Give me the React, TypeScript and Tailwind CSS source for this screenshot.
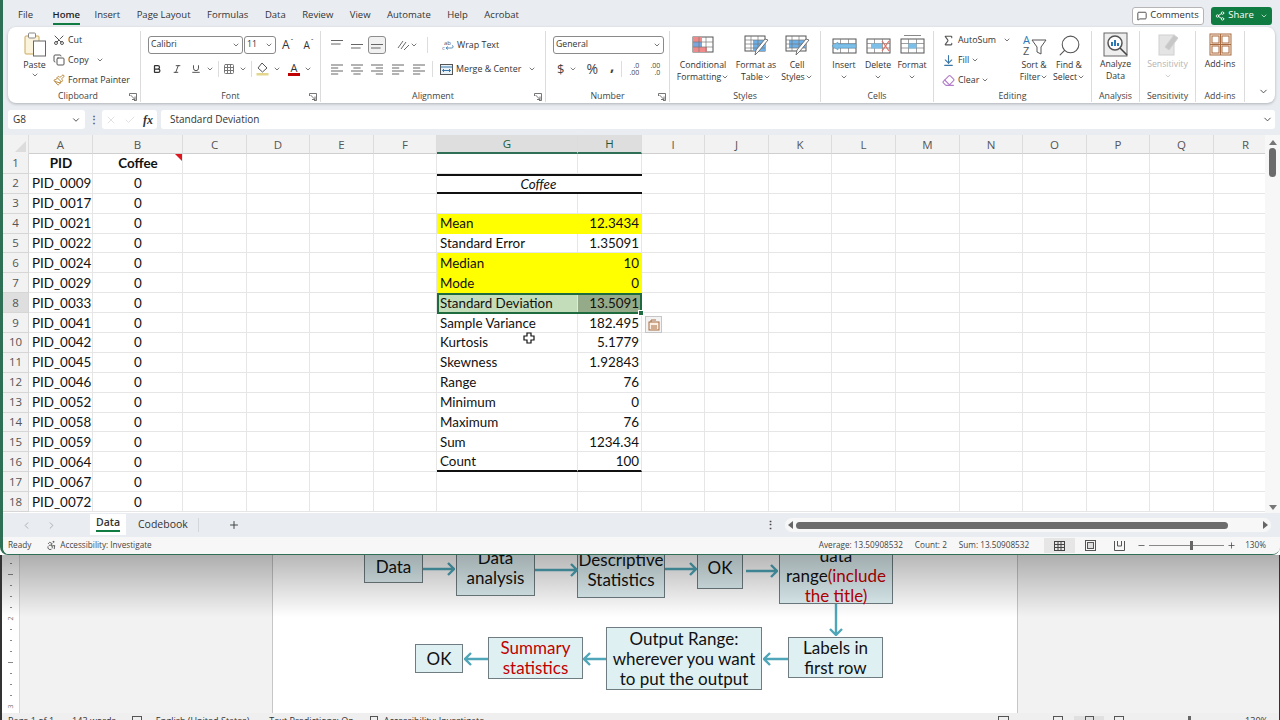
import { ChevronDown, ChevronLeft, ChevronRight, Scissors, Copy, Paintbrush, Bold, Italic, Underline, MessageSquare, Share2, Check, X, Plus, Minus, Search, Sigma, Eraser, ArrowDownToLine, Grid3x3, Accessibility } from 'lucide-react';
import type { ReactNode } from 'react';

const sans = "font-['Open_Sans','Noto_Sans',sans-serif]";

const colHeads = ['A', 'B', 'C', 'D', 'E', 'F', 'G', 'H', 'I', 'J', 'K', 'L', 'M', 'N', 'O', 'P', 'Q', 'R'];
const rowGrid =
  'grid grid-cols-[26px_64px_90px_64px_63px_64px_63px_141px_64px_63px_64px_63px_64px_64px_63px_64px_63px_64px_64px]';

const pids = ['PID_0009', 'PID_0017', 'PID_0021', 'PID_0022', 'PID_0024', 'PID_0029', 'PID_0033', 'PID_0041', 'PID_0042', 'PID_0045', 'PID_0046', 'PID_0052', 'PID_0058', 'PID_0059', 'PID_0064', 'PID_0067', 'PID_0072'];

const stats: Record<number, { label: string; value: string; yellow?: boolean }> = {
  4: { label: 'Mean', value: '12.3434', yellow: true },
  5: { label: 'Standard Error', value: '1.35091' },
  6: { label: 'Median', value: '10', yellow: true },
  7: { label: 'Mode', value: '0', yellow: true },
  8: { label: 'Standard Deviation', value: '13.5091' },
  9: { label: 'Sample Variance', value: '182.495' },
  10: { label: 'Kurtosis', value: '5.1779' },
  11: { label: 'Skewness', value: '1.92843' },
  12: { label: 'Range', value: '76' },
  13: { label: 'Minimum', value: '0' },
  14: { label: 'Maximum', value: '76' },
  15: { label: 'Sum', value: '1234.34' },
  16: { label: 'Count', value: '100' },
};

const rulerMarks = ['-', '=', '-', '-', '-', '2', '-', '-', '-', '=', '-', '-', '-', '3'];

function Tab({ children, active, className = '' }: { children: ReactNode; active?: boolean; className?: string }) {
  return (
    <div className={`${active ? 'relative font-semibold text-[#1d1d1d]' : 'text-[#333]'} ${className}`}>
      {children}
      {active && <div className="absolute left-0 right-0 -bottom-[2px] h-[2px] bg-[#107c41]" />}
    </div>
  );
}

function Group({ width, label, launcher, children }: { width: string; label: string; launcher?: boolean; children: ReactNode }) {
  return (
    <div className={`${width} relative flex flex-col shrink-0 border-r border-[#dcdcdc] mt-[4px] h-[71px]`}>
      <div className="flex-1 min-h-0">{children}</div>
      <div className="h-[12px] flex items-center justify-center text-[8.8px] leading-none text-[#444]">{label}</div>
      {launcher && (
        <svg className="absolute right-[3px] bottom-[1px]" width="8" height="8" viewBox="0 0 8 8" fill="none" stroke="#666" strokeWidth="0.9">
          <path d="M0.5 3V0.5H7.5V7.5H5M1.5 2L6 6.5M6 3.5V6.5H3" />
        </svg>
      )}
    </div>
  );
}

function Big({ icon, lines, caret = true, muted, width = '' }: { icon: ReactNode; lines: string[]; caret?: boolean; muted?: boolean; width?: string }) {
  return (
    <div className={`${width} flex flex-col items-center text-[8.7px] leading-[12px] ${muted ? 'text-[#b5b5b5]' : 'text-[#333]'}`}>
      <div className="h-[26px] flex items-center justify-center">{icon}</div>
      <div className="mt-[1px] text-center whitespace-nowrap">{lines[0]}</div>
      {lines[1] ? (
        <div className="text-center whitespace-nowrap flex items-center">
          {lines[1]}
          {caret && <ChevronDown size={8} />}
        </div>
      ) : (
        caret && <ChevronDown size={8} className="mt-[2px]" />
      )}
    </div>
  );
}

function TableIcon({ cell }: { cell?: boolean }) {
  return (
    <svg width="25" height="24" viewBox="0 0 25 24" fill="none">
      <rect x="1" y="3" width="20" height="15" fill="#fff" stroke="#555" />
      {cell ? <rect x="4" y="7" width="17" height="8" fill="#6cb0ea" /> : <rect x="9" y="7" width="12" height="11" fill="#6cb0ea" />}
      <path d="M1 7H21M1 11H21M1 15H21M7 3V18M14 3V18" stroke="#777" strokeWidth="0.7" />
      <path d="M24 7L15 18L11 22L12 17L21 6Z" fill="#fff" stroke="#666" strokeWidth="0.9" />
    </svg>
  );
}

function CellsIcon({ kind }: { kind: 'insert' | 'delete' | 'format' }) {
  return (
    <svg width="25" height="22" viewBox="0 0 25 22" fill="none">
      <rect x="1" y="5" width="23" height="14" fill="#fff" stroke="#555" />
      <path d="M1 9.5H24M1 14H24M8.5 5V19M16.5 5V19" stroke="#777" strokeWidth="0.7" />
      {kind === 'insert' && <path d="M0 12L6 8V10H24V14H6V16Z" fill="#7cc0ea" stroke="#4a96c8" strokeWidth="0.5" />}
      {kind === 'delete' && (
        <>
          <rect x="5" y="9.5" width="11" height="5" fill="#7cc0ea" />
          <path d="M16 7L23 17M23 7L16 17" stroke="#d9766c" strokeWidth="1.3" />
        </>
      )}
      {kind === 'format' && (
        <>
          <rect x="8.5" y="9.5" width="8" height="5" fill="#7cc0ea" />
          <path d="M4 1.5H21" stroke="#888" />
        </>
      )}
    </svg>
  );
}

function Small({ icon, label, caret, tight }: { icon: ReactNode; label: string; caret?: boolean; tight?: boolean }) {
  return (
    <div className="flex items-center gap-[3px] h-[20px] text-[8.9px] text-[#333] whitespace-nowrap">
      {icon}
      <span>{label}</span>
      {caret && <ChevronDown size={8} className={tight ? '-ml-[1px]' : 'ml-[4px]'} />}
    </div>
  );
}

function AlignIcon({ rows, className, center, right, top }: { rows: number[]; className?: string; center?: boolean; right?: boolean; top?: boolean }) {
  return (
    <svg className={className} width="12" height="12" viewBox="0 0 12 12" fill="none" stroke="#555" strokeWidth="0.9">
      {rows.map((r, i) => {
        if (r === 0) return null;
        const w = r * 12;
        const x = center ? (12 - w) / 2 : right ? 12 - w : 0;
        const gap = rows.length === 4 ? 3 : 3.5;
        const y = (top ? 1.5 : 2) + i * gap;
        return <path key={i} d={`M${x} ${y}H${x + w}`} />;
      })}
    </svg>
  );
}

function Ribbon() {
  return (
    <div className="ml-[5px] mr-[5px] h-[76px] bg-white rounded-[8px] shadow-[0_1px_3px_rgba(0,0,0,0.25)] flex pl-[8px] relative">
      <Group width="w-[125px]" label="Clipboard" launcher>
        <div className="flex pt-[1px]">
          <div className="w-[37px] flex flex-col items-center text-[8.9px] text-[#333]">
            <svg width="22" height="26" viewBox="0 0 22 26" fill="none">
              <rect x="1" y="4" width="14" height="18" rx="1" fill="#fbf3dc" stroke="#c9a85b" />
              <rect x="4.5" y="1" width="7" height="5" rx="1" fill="#fff" stroke="#888" />
              <rect x="9.5" y="9" width="12" height="15" fill="#fff" stroke="#666" />
            </svg>
            <div className="leading-[12px] mt-[1px]">Paste</div>
            <ChevronDown size={8} />
          </div>
          <div className="flex flex-col -mt-[2px]">
            <Small icon={<Scissors size={12} className="text-[#555] -rotate-90" />} label="Cut" />
            <Small icon={<Copy size={12} className="text-[#555]" />} label="Copy" caret />
            <Small icon={<Paintbrush size={12} className="text-[#b9883c]" />} label="Format Painter" />
          </div>
        </div>
      </Group>
      <Group width="w-[180px]" label="Font" launcher>
        <div className="pl-[7px] pt-[5px] flex items-center gap-[1px]">
          <div className="w-[95px] h-[18px] border border-[#8a8a8a] rounded-[3px] flex items-center justify-between px-[2px] text-[8.7px] text-[#333]">
            Calibri <ChevronDown size={8} />
          </div>
          <div className="w-[32px] h-[18px] border border-[#8a8a8a] rounded-[3px] flex items-center justify-between px-[2px] text-[8.7px] text-[#333]">
            11 <ChevronDown size={8} />
          </div>
          <span className="ml-[5px] text-[12px] leading-none text-[#333]">A</span>
          <span className="text-[7px] -mt-[6px] text-[#333]">ˆ</span>
          <span className="ml-[9px] text-[10px] leading-none text-[#333]">A</span>
          <span className="text-[7px] -mt-[6px] text-[#333]">ˇ</span>
        </div>
        <div className="flex items-center h-[20px] mt-[5px] pl-[11px] text-[#333]">
          <Bold size={10} strokeWidth={3} />
          <Italic size={10} className="ml-[10px]" />
          <Underline size={10} className="ml-[9px]" />
          <ChevronDown size={8} className="ml-[5px]" />
          <div className="h-[16px] w-px bg-[#ddd] ml-[4px]" />
          <Grid3x3 size={12} className="ml-[4px] text-[#777]" />
          <ChevronDown size={8} className="ml-[4px]" />
          <div className="h-[16px] w-px bg-[#ddd] ml-[4px]" />
          <svg className="ml-[4px]" width="13" height="14" viewBox="0 0 13 14" fill="none">
            <path d="M6 1L11 6L6.5 10L2 6Z" stroke="#555" />
            <rect x="0.5" y="11" width="12" height="2.5" fill="#e2d78c" />
          </svg>
          <ChevronDown size={8} className="ml-[4px]" />
          <div className="ml-[7px] flex flex-col items-center leading-none">
            <span className="text-[11px] leading-[10px]">A</span>
            <div className="w-[12px] h-[3px] bg-[#c00000]" />
          </div>
          <ChevronDown size={8} className="ml-[4px]" />
        </div>
      </Group>
      <Group width="w-[225px]" label="Alignment" launcher>
        <div className="pl-[10px] flex items-center h-[22px] mt-[3px]">
          <AlignIcon rows={[1, 0.8, 0]} top />
          <AlignIcon rows={[0, 1, 0.8]} className="ml-[8px]" />
          <div className="ml-[5px] w-[18px] h-[18px] border border-[#8d8d8d] rounded-[3px] bg-[#f1f1f1] flex items-center justify-center">
            <AlignIcon rows={[0, 1, 0.8]} />
          </div>
          <svg className="ml-[10px]" width="14" height="12" viewBox="0 0 14 12" fill="none" stroke="#6a6a6a">
            <path d="M2 9L7 2M5 10L10 3M8 11L13 6" />
          </svg>
          <ChevronDown size={8} className="text-[#333]" />
          <div className="h-[16px] w-px bg-[#ddd] ml-[9px]" />
          <div className="ml-[14px] flex items-center gap-[3px] text-[8.9px] text-[#333]">
            <svg width="12" height="12" viewBox="0 0 12 12" fill="none">
              <text x="2" y="5.5" fontSize="6" fill="#555">ab</text>
              <text x="0" y="11" fontSize="6" fill="#3a76a8">c</text>
              <path d="M4 9H10C11.5 9 11.5 6.5 10 6.5M4 9L6 7.5M4 9L6 10.5" stroke="#3a76a8" strokeWidth="0.8" />
            </svg>
            Wrap Text
          </div>
        </div>
        <div className="pl-[10px] flex items-center h-[22px] mt-[2px]">
          <AlignIcon rows={[1, 0.6, 1, 0.6]} />
          <AlignIcon rows={[1, 0.6, 1, 0.6]} center className="ml-[8px]" />
          <AlignIcon rows={[1, 0.6, 1, 0.6]} right className="ml-[8px]" />
          <AlignIcon rows={[1, 0.6, 1, 0.6]} className="ml-[9px]" />
          <AlignIcon rows={[1, 0.6, 1, 0.6]} className="ml-[9px]" />
          <div className="h-[16px] w-px bg-[#ddd] ml-[7px]" />
          <svg className="ml-[7px]" width="13" height="11" viewBox="0 0 13 11" fill="none">
            <rect x="0.5" y="0.5" width="12" height="10" fill="#e9f3fa" stroke="#555" />
            <path d="M0.5 3H12.5M2.5 6.5H10.5M2.5 6.5L4 5M2.5 6.5L4 8M10.5 6.5L9 5M10.5 6.5L9 8" stroke="#3a76a8" />
          </svg>
          <span className="ml-[3px] text-[8.9px] text-[#333] whitespace-nowrap">Merge &amp; Center</span>
          <ChevronDown size={8} className="ml-[7px] text-[#333]" />
        </div>
      </Group>
      <Group width="w-[124px]" label="Number" launcher>
        <div className="pl-[7px] pt-[5px]">
          <div className="w-[111px] h-[18px] border border-[#8a8a8a] rounded-[3px] flex items-center justify-between px-[2px] text-[8.7px] text-[#333]">
            General <ChevronDown size={8} />
          </div>
        </div>
        <div className="flex items-center h-[20px] mt-[5px] pl-[11px] text-[#444]">
          <span className="text-[13px] leading-none">$</span>
          <ChevronDown size={8} className="ml-[5px]" />
          <span className="ml-[9px] text-[14px] leading-none">%</span>
          <span className="ml-[12px] text-[15px] leading-none font-bold -mt-[8px]">,</span>
          <div className="h-[16px] w-px bg-[#ddd] ml-[7px]" />
          <span className="ml-[4px] w-[13px] text-[7px] leading-[7px] text-right">.0<br />.00</span>
          <span className="ml-[8px] w-[13px] text-[7px] leading-[7px] text-right">.00<br />.0</span>
        </div>
      </Group>
      <Group width="w-[151px]" label="Styles">
        <div className="flex pl-[4px] pt-[1px]">
          <Big
            width="w-[58px]"
            lines={['Conditional', 'Formatting']}
            icon={
              <svg width="22" height="18" viewBox="0 0 22 18" fill="none">
                <rect x="1" y="1" width="20" height="15" fill="#fff" stroke="#555" />
                <rect x="1" y="1" width="9" height="5" fill="#f08a8a" />
                <rect x="1" y="6" width="9" height="5" fill="#7aa7dd" />
                <rect x="1" y="11" width="14" height="5" fill="#f08a8a" />
                <path d="M1 6H21M1 11H21M7 1V16M14 1V16" stroke="#777" strokeWidth="0.7" />
              </svg>
            }
          />
          <Big width="w-[44px] ml-[2px]" lines={['Format as', 'Table']} icon={<TableIcon />} />
          <Big width="w-[34px] ml-[2px]" lines={['Cell', 'Styles']} icon={<TableIcon cell />} />
        </div>
      </Group>
      <Group width="w-[113px]" label="Cells">
        <div className="flex pl-[6px] pt-[1px]">
          <Big width="w-[34px]" lines={['Insert']} icon={<CellsIcon kind="insert" />} />
          <Big width="w-[34px]" lines={['Delete']} icon={<CellsIcon kind="delete" />} />
          <Big width="w-[34px]" lines={['Format']} icon={<CellsIcon kind="format" />} />
        </div>
      </Group>
      <Group width="w-[158px]" label="Editing">
        <div className="flex pl-[8px] pt-[1px]">
          <div className="flex flex-col w-[72px] -mt-[2px]">
            <Small icon={<Sigma size={13} className="text-[#555]" />} label="AutoSum" caret />
            <Small icon={<ArrowDownToLine size={13} className="text-[#3a76a8]" />} label="Fill" caret tight />
            <Small icon={<Eraser size={13} className="text-[#b27cc9]" />} label="Clear" caret tight />
          </div>
          <Big
            width="w-[40px]"
            lines={['Sort &', 'Filter']}
            icon={
              <svg width="25" height="24" viewBox="0 0 25 24" fill="none" stroke="#555">
                <path d="M10 7H24L19 14V21L15 19V14Z" />
                <text x="1" y="11" fontSize="11" fill="#2a7ab8" stroke="none">A</text>
                <text x="1" y="22" fontSize="11" fill="#555" stroke="none">Z</text>
              </svg>
            }
          />
          <Big width="w-[30px]" lines={['Find &', 'Select']} icon={<Search size={25} strokeWidth={1} className="text-[#555] -scale-x-100" />} />
        </div>
      </Group>
      <Group width="w-[48px]" label="Analysis">
        <Big
          lines={['Analyze', 'Data']}
          caret={false}
          icon={
            <svg width="25" height="25" viewBox="0 0 25 25" fill="none">
              <rect x="1" y="1" width="23" height="23" fill="#eee" stroke="#666" />
              <circle cx="12" cy="11" r="7" fill="#fff" stroke="#555" strokeWidth="1.5" />
              <path d="M9 14V10M12 14V8M15 14V11" stroke="#2a7ab8" strokeWidth="2" />
              <path d="M17 16L24 23" stroke="#444" strokeWidth="1.6" />
            </svg>
          }
        />
      </Group>
      <Group width="w-[56px]" label="Sensitivity">
        <Big
          muted
          lines={['Sensitivity']}
          icon={
            <svg width="22" height="24" viewBox="0 0 22 24" fill="#e4e4e4" stroke="#d0d0d0">
              <rect x="2" y="3" width="15" height="20" />
              <path d="M8 15L17 3L21 6L12 18Z" fill="#c7c7c7" />
            </svg>
          }
        />
      </Group>
      <Group width="w-[49px]" label="Add-ins">
        <Big
          lines={['Add-ins']}
          caret={false}
          icon={
            <svg width="23" height="23" viewBox="0 0 23 23" fill="none" stroke="#a86a3f">
              <rect x="1" y="1" width="21" height="21" fill="#fbeee2" />
              <path d="M11.5 1V22M1 11.5H22" />
              <rect x="3" y="3" width="7" height="7" fill="#fff" />
              <rect x="13" y="3" width="7" height="7" fill="#fff" />
              <rect x="3" y="13" width="7" height="7" fill="#fff" />
              <rect x="13" y="13" width="7" height="7" fill="#fff" />
            </svg>
          }
        />
      </Group>
      <ChevronDown size={11} className="absolute right-[6px] bottom-[6px] text-[#444]" />
    </div>
  );
}

function FormulaBar() {
  return (
    <div className="mt-[7px] h-[19px] ml-[5px] mr-[5px] flex items-stretch text-[10px] text-[#333]">
      <div className="w-[77px] bg-white rounded-[3px] flex items-center justify-between pl-[5px] pr-[4px]">
        G8 <ChevronDown size={10} />
      </div>
      <div className="w-[17px] flex items-center justify-center font-bold text-[#555]">⋮</div>
      <div className="w-[55px] bg-white rounded-[3px] flex items-center pl-[3px] gap-[7px] text-[#c4c4c4]">
        <X size={12} strokeWidth={1} />
        <Check size={12} strokeWidth={1} />
        <span className="font-['Liberation_Serif',serif] italic font-bold text-[12px] text-[#333]">fx</span>
      </div>
      <div className="ml-[4px] flex-1 bg-white rounded-[3px] flex items-center justify-between pl-[9px] pr-[2px]">
        Standard Deviation <ChevronDown size={11} className="text-[#444]" />
      </div>
    </div>
  );
}

function Cell({ children, className = '' }: { children?: ReactNode; className?: string }) {
  return <div className={`min-w-0 flex items-center pl-[3px] pr-[2px] border-r border-b border-[#e6e6e6] whitespace-nowrap ${className}`}>{children}</div>;
}

function Sheet() {
  const rows = Array.from({ length: 18 }, (_, i) => i + 1);
  const blanks = (n: number) => Array.from({ length: n }, (_, i) => <Cell key={i} />);
  return (
    <div className="flex-1 min-h-0 mt-[6px] flex flex-col overflow-hidden relative bg-white">
      <div className={`${rowGrid} h-[19px] bg-[#f2f2f2] text-[11.5px] text-[#555] shrink-0 ${sans}`}>
        <div className="flex items-end justify-end pr-[2px] pb-[2px] border-r border-[#ddd]">
          <div className="w-0 h-0 border-l-[11px] border-l-transparent border-b-[11px] border-b-[#dcdcdc]" />
        </div>
        {colHeads.map((c) => (
          <div
            key={c}
            className={`flex items-center justify-center border-r border-[#dcdcdc] ${c === 'G' || c === 'H' ? 'bg-[#dedede] border-b-2 border-b-[#2f6f55] text-[#1a5c38]' : 'border-b border-b-[#cfcfcf]'}`}
          >
            {c}
          </div>
        ))}
      </div>
      <div className="font-['Lato',sans-serif] text-[13.4px] leading-[14px] text-[#111]">
        {rows.map((r) => {
          const s = stats[r];
          const isSel = r === 8;
          const fill = s?.yellow ? 'bg-[#ffff00] border-[#ffff00]' : '';
          return (
            <div key={r} className={`${rowGrid} h-[19.9px]`}>
              <div className={`flex items-center justify-center border-r border-b border-[#d6d6d6] text-[11.5px] text-[#555] ${sans} ${isSel ? 'bg-[#dedede] text-[#1a5c38]' : 'bg-[#f2f2f2]'}`}>
                {r}
              </div>
              <Cell className={r === 1 ? 'justify-center font-bold' : ''}>{r === 1 ? 'PID' : pids[r - 2]}</Cell>
              <Cell className={`justify-center relative ${r === 1 ? 'font-bold' : ''}`}>
                {r === 1 ? 'Coffee' : '0'}
                {r === 1 && <div className="absolute right-0 top-0 w-0 h-0 border-l-[7px] border-l-transparent border-t-[7px] border-t-[#e0161e]" />}
              </Cell>
              {blanks(4)}
              {r === 2 ? (
                <div className="col-span-2 flex items-center justify-center pr-[2px] italic border-y-2 border-[#111]">Coffee</div>
              ) : s ? (
                <>
                  <Cell className={`${fill} ${isSel ? 'bg-[#c3dcb9]' : ''} ${r === 16 ? 'border-b-2 border-b-[#111]' : ''}`}>{s.label}</Cell>
                  <Cell className={`justify-end ${fill} ${isSel ? 'bg-[#95aa88]' : ''} ${r === 16 ? 'border-b-2 border-b-[#111]' : ''}`}>{s.value}</Cell>
                </>
              ) : (
                blanks(2)
              )}
              {blanks(10)}
            </div>
          );
        })}
      </div>

      {/* selection box, quick analysis button and cursor lie over the grid */}
      <div className="absolute left-[434px] top-[158px] w-[205px] h-[21px] border-2 border-[#1f6b40]">
        <div className="absolute -right-[4px] -bottom-[4px] w-[6px] h-[6px] bg-[#1f6b40] border border-white" />
      </div>
      <div className="absolute left-[642px] top-[181px] w-[17px] h-[17px] bg-[#f3f3f3] border border-[#c6c6c6] flex items-center justify-center">
        <svg width="12" height="12" viewBox="0 0 12 12" fill="none" stroke="#a86a3f">
          <rect x="1" y="3" width="10" height="8" fill="#fbeee2" />
          <path d="M3 3V1H8M3 7H9M3 9H9" />
        </svg>
      </div>
      <svg className="absolute left-[520px] top-[197px]" width="12" height="12" viewBox="0 0 12 12" fill="#fff" stroke="#111" strokeWidth="1.2">
        <path d="M4 1H8V4H11V8H8V11H4V8H1V4H4Z" />
      </svg>

      {/* vertical scrollbar */}
      <div className="absolute right-0 top-0 bottom-0 w-[15px] bg-[#f7f7f7] flex flex-col items-center pt-[5px] justify-between pb-[3px]">
        <div className="flex flex-col items-center gap-[3px]">
          <div className="w-0 h-0 border-x-[4px] border-x-transparent border-b-[5px] border-b-[#777]" />
          <div className="w-[7px] h-[29px] rounded-full bg-[#6b6b6b]" />
        </div>
        <div className="w-0 h-0 border-x-[4px] border-x-transparent border-t-[5px] border-t-[#777]" />
      </div>
    </div>
  );
}

function SheetTabs() {
  return (
    <div className={`h-[24px] shrink-0 bg-[#e9edf2] flex items-center text-[10.5px] text-[#333] ${sans}`}>
      <ChevronLeft size={11} className="ml-[18px] text-[#aaa]" />
      <ChevronRight size={11} className="ml-[14px] text-[#aaa]" />
      <div className="ml-[33px] w-[36px] h-[21px] -mt-[2px] bg-white flex flex-col items-center justify-center font-semibold">
        <span className="leading-[13px]">Data</span>
        <div className="w-[24px] h-[2px] bg-[#107c41] mt-[1px]" />
      </div>
      <div className="ml-[12px] text-[#333]">Codebook</div>
      <div className="h-[14px] w-px bg-[#d3d6da] ml-[10px]" />
      <Plus size={12} className="ml-[29px] text-[#444]" />
      <div className="ml-auto mr-[9px] flex items-center w-[510px]">
        <span className="font-bold text-[#444] ml-[4px] mr-[9px] leading-none">⋮</span>
        <div className="flex-1 h-[14px] bg-[#f7f7f7] rounded-full flex items-center px-[3px]">
          <div className="w-0 h-0 border-y-[4px] border-y-transparent border-r-[5px] border-r-[#666]" />
          <div className="ml-[3px] w-[432px] h-[7px] rounded-full bg-[#6b6b6b]" />
          <div className="ml-auto w-0 h-0 border-y-[4px] border-y-transparent border-l-[5px] border-l-[#666]" />
        </div>
      </div>
    </div>
  );
}

function StatusBar() {
  return (
    <div className={`h-[17px] shrink-0 bg-[#f7f7f7] flex items-center text-[8.2px] text-[#444] pl-[5px] ${sans}`}>
      <span>Ready</span>
      <Accessibility size={11} className="ml-[15px] text-[#555]" />
      <span className="ml-[3px]">Accessibility: Investigate</span>
      <div className="ml-auto flex items-center">
        <span>Average: 13.50908532</span>
        <span className="ml-[12px]">Count: 2</span>
        <span className="ml-[12px]">Sum: 13.50908532</span>
        <div className="ml-[15px] w-[31px] h-[15px] bg-[#e6e6e6] flex items-center justify-center">
          <svg width="11" height="10" viewBox="0 0 11 10" fill="none" stroke="#444">
            <path d="M0 .5H11M0 3.5H11M0 6.5H11M0 9.5H11M.5 0V10M4 0V10M7 0V10M10.5 0V10" />
          </svg>
        </div>
        <svg className="ml-[10px]" width="11" height="11" viewBox="0 0 11 11" fill="none" stroke="#555">
          <rect x=".5" y=".5" width="10" height="10" />
          <rect x="2.5" y="2.5" width="6" height="6" fill="#ddd" />
        </svg>
        <svg className="ml-[18px]" width="11" height="10" viewBox="0 0 11 10" fill="none" stroke="#555">
          <path d="M.5 0V9.5H10.5V0M3.5 0V5H7.5V0" />
        </svg>
        <Minus size={9} className="ml-[12px]" />
        <div className="ml-[3px] w-[75px] h-px bg-[#888] relative">
          <div className="absolute left-[41px] -top-[4px] w-[3px] h-[9px] bg-[#666]" />
        </div>
        <Plus size={9} className="ml-[3px]" />
        <span className="ml-[9px] mr-[14px]">130%</span>
      </div>
    </div>
  );
}

// flowchart nodes sit at their own places on the page behind the window
function Node({ pos, children }: { pos: string; children: ReactNode }) {
  return (
    <div className={`absolute ${pos} bg-[#dff0f3] border border-[#6f7d82] flex flex-col items-center justify-center text-center text-[17px] leading-[20px] text-[#111] font-['Lato',sans-serif] whitespace-nowrap`}>
      {children}
    </div>
  );
}

function Arrow({ pos, dir, len = 31 }: { pos: string; dir: 'left' | 'right' | 'down'; len?: number }) {
  const path =
    dir === 'right'
      ? `M0 7H${len}M${len - 6} 1L${len} 7L${len - 6} 13`
      : dir === 'left'
        ? `M${len} 7H1M7 1L1 7L7 13`
        : `M7 0V${len}M1 ${len - 6}L7 ${len}L13 ${len - 6}`;
  const w = dir === 'down' ? 14 : len + 1;
  const h = dir === 'down' ? len + 1 : 14;
  return (
    <svg className={`absolute ${pos}`} width={w} height={h} viewBox={`0 0 ${w} ${h}`} fill="none" stroke="#4fa6b8" strokeWidth="2.4">
      <path d={path} />
    </svg>
  );
}

function Doc() {
  return (
    <div className="absolute left-0 right-0 top-[555px] bottom-0 overflow-hidden bg-[#f2f2f2] border-l-2 border-r border-[#333]">
      <div className="absolute left-0 top-0 bottom-0 w-[18px] bg-white border-r border-[#d8d8d8] flex flex-col items-center pt-[3px] text-[#777]">
        {rulerMarks.map((m, i) => (
          <div key={i} className="h-[11px] flex items-center justify-center">
            {m === '-' && <div className="w-[2px] h-px bg-[#888]" />}
            {m === '=' && <div className="w-[5px] h-px bg-[#888]" />}
            {m !== '-' && m !== '=' && <span className="text-[7px] leading-none -rotate-90">{m}</span>}
          </div>
        ))}
      </div>
      <div className="absolute left-[270px] top-0 bottom-0 w-[746px] bg-white border-x border-[#c6c6c6]" />

      <div className="absolute -left-[2px] top-0 w-[1280px] h-[165px]">
        <Node pos="left-[364px] -top-[4px] w-[59px] h-[32px]">Data</Node>
        <Node pos="left-[456px] -top-[15px] w-[79px] h-[56px]"><span>Data</span><span>analysis</span></Node>
        <Node pos="left-[577px] -top-[13px] w-[88px] h-[56px]"><span>Descriptive</span><span>Statistics</span></Node>
        <Node pos="left-[697px] -top-[8px] w-[46px] h-[42px]">OK</Node>
        <Node pos="left-[779px] -top-[7px] w-[114px] h-[56px]">
          <span>data</span>
          <span>range<span className="text-[#c00000]">(include</span></span>
          <span className="text-[#c00000]">the title)</span>
        </Node>

        <Arrow pos="left-[423px] top-[7px]" dir="right" />
        <Arrow pos="left-[535px] top-[8px]" dir="right" len={42} />
        <Arrow pos="left-[665px] top-[7px]" dir="right" />
        <Arrow pos="left-[746px] top-[9px]" dir="right" />
        <Arrow pos="left-[829px] top-[49px]" dir="down" />

        <Node pos="left-[788px] top-[82px] w-[95px] h-[41px]"><span>Labels in</span><span>first row</span></Node>
        <Node pos="left-[606px] top-[72px] w-[156px] h-[63px]"><span>Output Range:</span><span>wherever you want</span><span>to put the output</span></Node>
        <Node pos="left-[488px] top-[82px] w-[95px] h-[42px]"><span className="text-[#c00000]">Summary</span><span className="text-[#c00000]">statistics</span></Node>
        <Node pos="left-[415px] top-[89px] w-[48px] h-[29px]">OK</Node>

        <Arrow pos="left-[763px] top-[97px]" dir="left" len={25} />
        <Arrow pos="left-[583px] top-[97px]" dir="left" len={23} />
        <Arrow pos="left-[464px] top-[97px]" dir="left" len={24} />
      </div>

      {/* shadow the window throws on the page */}
      <div className="absolute left-0 right-0 top-0 h-[62px] bg-gradient-to-b from-[#00000048] to-transparent" />

      <div className={`absolute left-0 right-0 bottom-0 h-[7px] bg-[#efefef] overflow-hidden text-[9px] leading-[9px] text-[#333] ${sans}`}>
        <div className="flex items-start pl-[6px] pt-[3px] whitespace-nowrap">
          <span>Page 1 of 1</span>
          <span className="ml-[18px]">143 words</span>
          <div className="ml-[16px] w-[10px] h-[8px] border border-[#555]" />
          <span className="ml-[14px]">English (United States)</span>
          <span className="ml-[20px]">Text Predictions: On</span>
          <div className="ml-[16px] w-[8px] h-[8px] border border-[#555]" />
          <span className="ml-[6px]">Accessibility: Investigate</span>
          <div className="ml-auto w-[11px] h-[8px] border border-[#555]" />
          <div className="ml-[44px] w-[10px] h-[8px] border border-[#555]" />
          <div className="ml-[11px] w-[30px] h-[7px] bg-[#e0e0e0] flex justify-center">
            <div className="w-[9px] h-[8px] border border-[#555]" />
          </div>
          <div className="ml-[10px] w-[10px] h-[8px] border border-[#555]" />
          <div className="ml-[64px] w-[3px] h-[8px] bg-[#666]" />
          <span className="ml-[54px] mr-[11px]">130%</span>
        </div>
      </div>
    </div>
  );
}

export default function App() {
  return (
    <div className={`relative w-[1280px] h-[720px] overflow-hidden bg-white ${sans}`}>
      <Doc />
      <div className="absolute left-0 right-0 top-0 h-[555px] flex flex-col bg-[#e9edf2] border-l-[3px] border-b border-[#2f6f55] rounded-bl-[8px] rounded-br-[8px] overflow-hidden">
        <div className="h-[27px] shrink-0 relative flex items-center text-[9.5px] pl-[15px] pt-[4px] gap-[16.5px]">
          <Tab className="mr-[3px]">File</Tab>
          <Tab active className="-mr-[2px]">Home</Tab>
          <Tab>Insert</Tab>
          <Tab>Page Layout</Tab>
          <Tab>Formulas</Tab>
          <Tab>Data</Tab>
          <Tab>Review</Tab>
          <Tab>View</Tab>
          <Tab>Automate</Tab>
          <Tab>Help</Tab>
          <Tab>Acrobat</Tab>
          <div className="ml-auto mr-[8px] flex items-center gap-[7px]">
            <div className="w-[72px] h-[18px] bg-white border border-[#b5b5b5] rounded-[3px] flex items-center justify-center gap-[3px] text-[#333]">
              <MessageSquare size={10} /> Comments
            </div>
            <div className="w-[61px] h-[18px] bg-[#107c41] rounded-[3px] flex items-center justify-center gap-[3px] text-white">
              <Share2 size={10} /> Share <ChevronDown size={8} className="ml-[3px]" />
            </div>
          </div>
        </div>
        <Ribbon />
        <FormulaBar />
        <Sheet />
        <SheetTabs />
        <StatusBar />
      </div>
    </div>
  );
}
